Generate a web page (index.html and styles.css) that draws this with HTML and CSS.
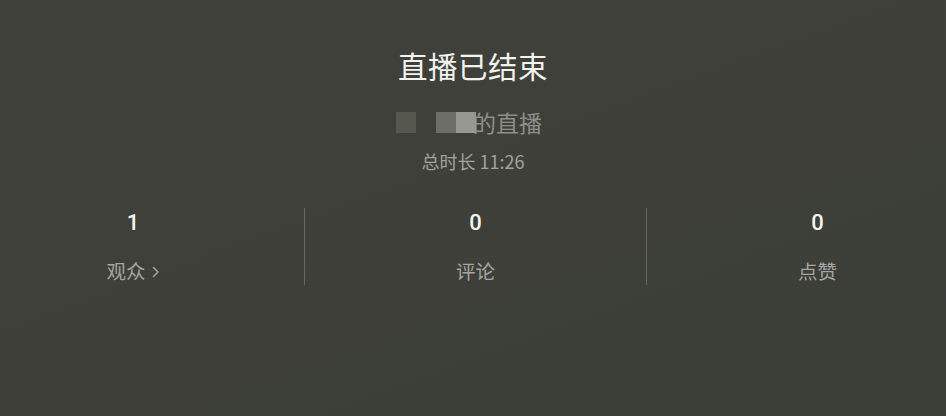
FILE: index.html
```html
<!DOCTYPE html>
<html lang="zh-CN">
<head>
<meta charset="utf-8">
<title>直播已结束</title>
<link rel="stylesheet" href="styles.css">
</head>
<body>
<main class="screen">
  <h1 class="title">直播已结束</h1>
  <div class="host">
    <span class="blk blk-a"></span>
    <span class="blk blk-gap"></span>
    <span class="blk blk-b"></span>
    <span class="blk blk-c"></span>
    <span class="host-text">的直播</span>
  </div>
  <div class="duration">总时长 11:26</div>
  <section class="stats">
    <div class="stat">
      <div class="num">1</div>
      <div class="label">观众<svg class="chev" viewBox="0 0 8 12" width="8" height="12"><path d="M1.5 1.5 L6 6 L1.5 10.5" fill="none" stroke="#a5a5a1" stroke-width="1.5" stroke-linecap="round" stroke-linejoin="round"/></svg></div>
    </div>
    <div class="stat stat-div">
      <div class="num">0</div>
      <div class="label">评论</div>
    </div>
    <div class="stat stat-div">
      <div class="num">0</div>
      <div class="label">点赞</div>
    </div>
  </section>
</main>
</body>
</html>
```

FILE: styles.css
```css
html, body {
  margin: 0;
  padding: 0;
}
body {
  width: 946px;
  height: 416px;
  overflow: hidden;
  background: #3f403a;
  font-family: "Noto Sans CJK SC", "Noto Sans", Roboto, sans-serif;
}
.screen {
  display: flex;
  flex-direction: column;
  align-items: center;
  padding-top: 45px;
  height: 416px;
  box-sizing: border-box;
  background: linear-gradient(160deg, #40413b 0%, #3e3f39 55%, #3a3e37 100%);
}
.title {
  margin: 0;
  font-size: 29.5px;
  line-height: 40px;
  font-weight: 400;
  color: #f2f2ef;
  letter-spacing: 0.5px;
}
.host {
  margin-top: 22px;
  height: 30px;
  display: flex;
  align-items: center;
  margin-right: 8px;
}
.blk {
  width: 20px;
  height: 21px;
  display: block;
  position: relative;
  z-index: 1;
}
.blk-a { background: #56574f; }
.blk-gap { background: transparent; }
.blk-b { background: #6c6d67; }
.blk-c { background: #979793; }
.host-text {
  margin-left: -3px;
  font-size: 23px;
  line-height: 30px;
  color: #8e8e89;
}
.duration {
  margin-top: 13px;
  font-size: 18px;
  line-height: 22px;
  color: #a2a29e;
}
.stats {
  margin-top: 36px;
  align-self: flex-start;
  margin-left: -38px;
  display: grid;
  grid-template-columns: 342px 342px 342px;
}
.stat {
  height: 77px;
  display: flex;
  flex-direction: column;
  align-items: center;
}
.stat-div {
  border-left: 1px solid #65665f;
}
.num {
  font-family: Roboto, "Noto Sans", sans-serif;
  font-size: 22px;
  line-height: 30px;
  font-weight: 500;
  color: #f4f4f2;
}
.label {
  margin-top: 20px;
  font-size: 19.5px;
  line-height: 26px;
  color: #a5a5a1;
  display: flex;
  align-items: center;
}
.chev {
  margin-left: 6px;
  margin-top: 1px;
}
```
